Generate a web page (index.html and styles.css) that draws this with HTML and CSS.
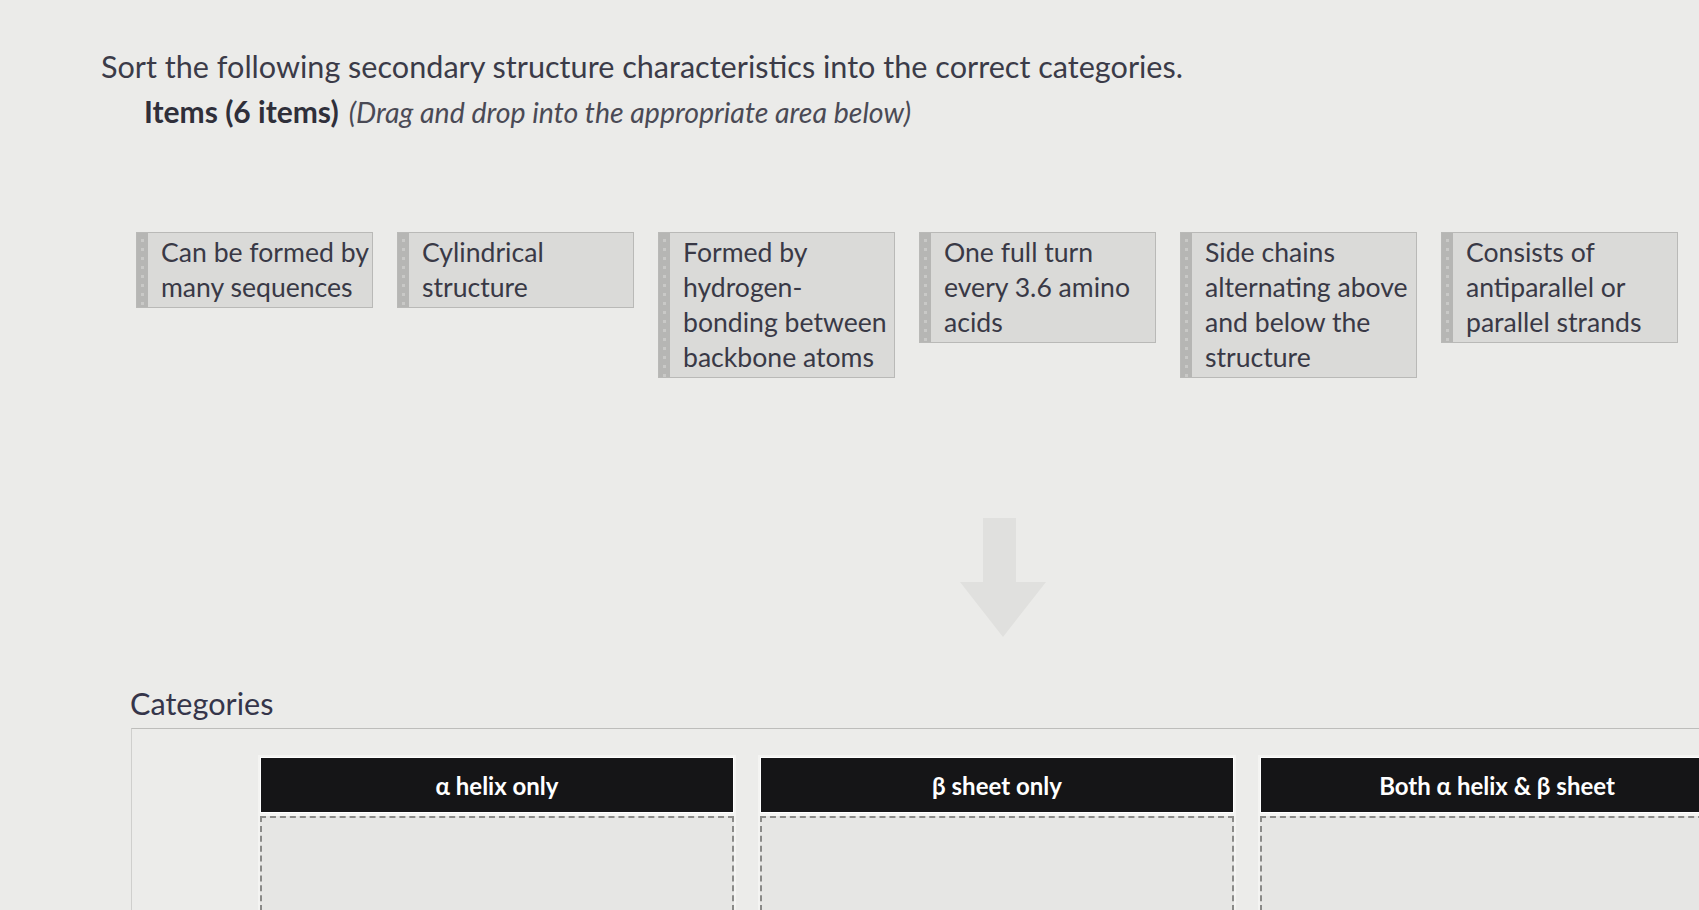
FILE: index.html
```html
<!DOCTYPE html>
<html>
<head>
<meta charset="utf-8">
<link rel="stylesheet" href="styles.css">
</head>
<body>
<div class="page">
  <h1 class="title">Sort the following secondary structure characteristics into the correct categories.</h1>
  <div class="items-label"><span class="items-strong">Items (6 items)</span> <span class="items-hint">(Drag and drop into the appropriate area below)</span></div>

  <div class="cards">
    <div class="card"><div class="grip"></div><div class="card-text">Can be formed by many sequences</div></div>
    <div class="card"><div class="grip"></div><div class="card-text">Cylindrical structure</div></div>
    <div class="card"><div class="grip"></div><div class="card-text">Formed by hydrogen-bonding between backbone atoms</div></div>
    <div class="card"><div class="grip"></div><div class="card-text">One full turn every 3.6 amino acids</div></div>
    <div class="card"><div class="grip"></div><div class="card-text">Side chains alternating above and below the structure</div></div>
    <div class="card"><div class="grip"></div><div class="card-text">Consists of antiparallel or parallel strands</div></div>
  </div>

  <div class="arrow-row">
    <svg class="arrow" width="88" height="120" viewBox="0 0 88 120">
      <path d="M24 0 H57 V64 H87 L44 119 L1 64 H24 Z" fill="#e0e0de"/>
    </svg>
  </div>

  <h2 class="cat-title">Categories</h2>
  <div class="cat-box">
    <div class="columns">
      <div class="column">
        <div class="col-head">α helix only</div>
        <div class="drop"></div>
      </div>
      <div class="column">
        <div class="col-head">β sheet only</div>
        <div class="drop"></div>
      </div>
      <div class="column">
        <div class="col-head">Both α helix &amp; β sheet</div>
        <div class="drop"></div>
      </div>
    </div>
  </div>
</div>
</body>
</html>
```

FILE: styles.css
```css
html, body {
  margin: 0;
  padding: 0;
  background: #ebebe9;
  overflow: hidden;
  height: 910px;
}

.page {
  font-family: Lato, "Open Sans", sans-serif;
  color: #3b3b48;
  padding: 42px 0 0 101px;
}

.title {
  margin: 0;
  font-size: 30.6px;
  font-weight: 400;
  line-height: 50px;
  white-space: nowrap;
}

.items-label {
  margin: 0 0 0 43px;
  line-height: 38px;
  white-space: nowrap;
}

.items-strong {
  font-size: 30px;
  font-weight: 700;
  color: #2f2f3a;
}

.items-hint {
  margin-left: 6px;
  font-size: 28.5px;
  font-style: italic;
  color: #4a4a55;
}

.cards {
  display: flex;
  align-items: flex-start;
  gap: 24px;
  margin: 96px 0 0 35px;
}

.card {
  display: flex;
  width: 237px;
  flex: none;
  background: #dadad8;
  border: 1px solid #b9b9b7;
  box-sizing: border-box;
}

.grip {
  width: 11px;
  flex: none;
  background-color: #b6b6b4;
  background-image: radial-gradient(circle, #c9c9c7 1.5px, transparent 2px);
  background-size: 11px 9px;
  background-position: 0 3px;
}

.card-text {
  padding: 2px 2px 2px 13px;
  font-size: 26.6px;
  line-height: 35px;
  color: #393946;
}

.arrow-row {
  margin: 140px 0 0 858px;
  height: 120px;
}

.arrow {
  display: block;
}

.cat-title {
  margin: 48px 0 0 29px;
  font-size: 30.6px;
  font-weight: 400;
  line-height: 36px;
  color: #35354a;
}

.cat-box {
  margin: 6px 0 0 30px;
  border-top: 1px solid #bdbdbb;
  border-left: 1px solid #cfcfcd;
  background: #ececea;
  padding: 26px 0 0 126px;
  height: 300px;
}

.columns {
  display: flex;
  gap: 22px;
}

.column {
  width: 478px;
  flex: none;
  background: #f4f4f2;
  padding: 2px;
  box-sizing: border-box;
}

.col-head {
  background: #151517;
  border: 1px solid #ffffff;
  height: 54px;
  display: flex;
  align-items: center;
  justify-content: center;
  color: #ffffff;
  font-size: 24px;
  font-weight: 700;
}

.drop {
  margin-top: 3px;
  height: 200px;
  border: 2px dashed #8a8a88;
  background: #e6e6e4;
}
```
